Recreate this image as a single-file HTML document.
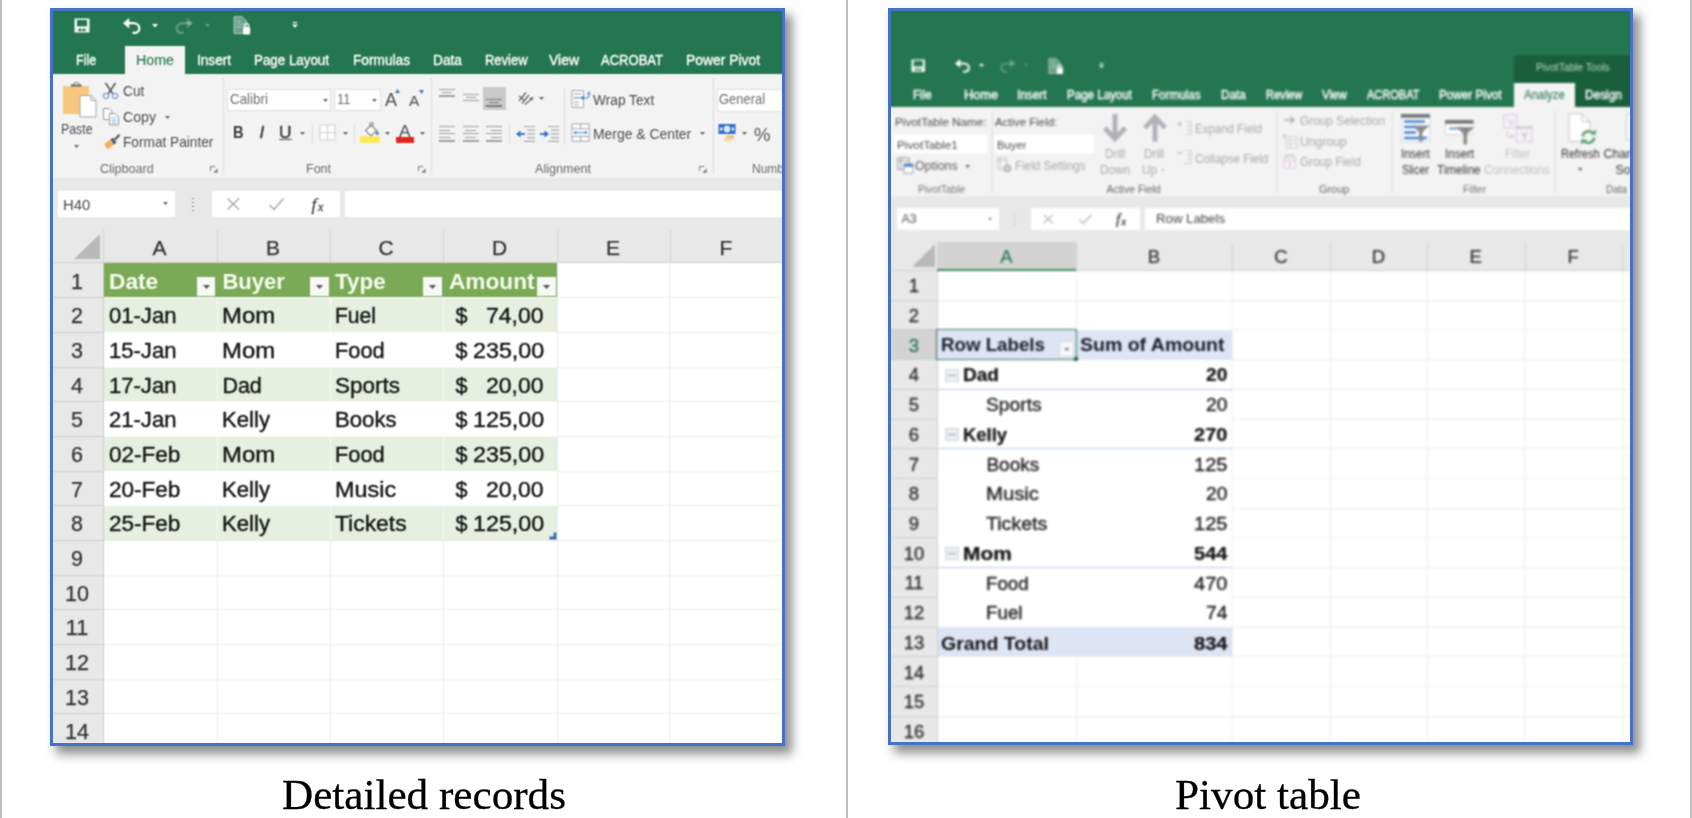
<!DOCTYPE html>
<html lang="en"><head><meta charset="utf-8"><title>Detailed records vs Pivot table</title>
<style>
html,body{margin:0;padding:0}
body{width:1692px;height:818px;position:relative;overflow:hidden;background:#fff;font-family:"Liberation Sans",sans-serif}
.vl{position:absolute;top:0;height:818px;background:#bdbdbd}
.frame{position:absolute;box-sizing:border-box;border:3px solid #4472c4;background:#fff;box-shadow:6px 7px 10px .5px rgba(0,0,0,.45)}
.clip{position:absolute;left:0;top:0;overflow:hidden}
.in{position:absolute;left:0;top:0}
#L{filter:url(#soft)}#R{filter:blur(.85px)}
.in>div,.in>span,.in>svg{position:absolute;display:block}
.in>span{white-space:pre}
.cap{position:absolute;white-space:pre;font-family:"Liberation Serif",serif;color:#000;-webkit-text-stroke:.3px #000}
</style></head><body>
<svg width="0" height="0" style="position:absolute"><filter id="soft" x="-2%" y="-2%" width="104%" height="104%" color-interpolation-filters="sRGB"><feConvolveMatrix order="3" kernelMatrix="1 2 1 2 4 2 1 2 1" divisor="16" edgeMode="duplicate"/></filter></svg>
<div class="vl" style="left:0;width:2px"></div>
<div class="vl" style="left:846px;width:2px"></div>
<div class="vl" style="left:1690px;width:2px"></div>
<div class="frame" style="left:50px;top:8px;width:735px;height:738px"><div class="clip" style="width:729px;height:732px"><div class="in" id="L" style="width:729px;height:732px">
<div style="left:-8px;top:-8px;width:745px;height:71px;background:#247650;"></div>
<div style="left:72px;top:35px;width:60px;height:29px;background:#f3f3f3;"></div>
<div style="left:-8px;top:63px;width:745px;height:104px;background:#f3f3f3;"></div>
<div style="left:-8px;top:167px;width:745px;height:85px;background:#e8e8e8;"></div>
<div style="left:-8px;top:252px;width:58px;height:488px;background:#e8e8e8;"></div>
<div style="left:50px;top:252px;width:687px;height:488px;background:#fff;"></div>
<span style="left:22.50px;top:40.15px;font-size:14px;line-height:18px;color:#fff;transform:scaleX(0.8954);transform-origin:left center;-webkit-text-stroke:0.35px #fff;">File</span>
<span style="left:82.50px;top:40.15px;font-size:14px;line-height:18px;color:#247650;transform:scaleX(1.0149);transform-origin:left center;-webkit-text-stroke:0.1px #247650;">Home</span>
<span style="left:143.80px;top:40.15px;font-size:14px;line-height:18px;color:#fff;transform:scaleX(0.9739);transform-origin:left center;-webkit-text-stroke:0.35px #fff;">Insert</span>
<span style="left:201.00px;top:40.15px;font-size:14px;line-height:18px;color:#fff;transform:scaleX(0.9539);transform-origin:left center;-webkit-text-stroke:0.35px #fff;">Page Layout</span>
<span style="left:299.50px;top:40.15px;font-size:14px;line-height:18px;color:#fff;transform:scaleX(0.9769);transform-origin:left center;-webkit-text-stroke:0.35px #fff;">Formulas</span>
<span style="left:380.00px;top:40.15px;font-size:14px;line-height:18px;color:#fff;transform:scaleX(0.9806);transform-origin:left center;-webkit-text-stroke:0.35px #fff;">Data</span>
<span style="left:431.50px;top:40.15px;font-size:14px;line-height:18px;color:#fff;transform:scaleX(0.9259);transform-origin:left center;-webkit-text-stroke:0.35px #fff;">Review</span>
<span style="left:496.00px;top:40.15px;font-size:14px;line-height:18px;color:#fff;-webkit-text-stroke:0.35px #fff;">View</span>
<span style="left:548.00px;top:40.15px;font-size:14px;line-height:18px;color:#fff;transform:scaleX(0.9304);transform-origin:left center;-webkit-text-stroke:0.35px #fff;">ACROBAT</span>
<span style="left:633.00px;top:40.15px;font-size:14px;line-height:18px;color:#fff;transform:scaleX(0.9907);transform-origin:left center;-webkit-text-stroke:0.35px #fff;">Power Pivot</span>
<div style="left:5px;top:180px;width:117px;height:26px;background:#fff;"></div>
<div style="left:159px;top:180px;width:128px;height:26px;background:#fff;"></div>
<div style="left:292px;top:180px;width:445px;height:26px;background:#fff;"></div>
<span style="left:9.80px;top:184.00px;font-size:15px;line-height:20px;color:#484848;transform:scaleX(0.9885);transform-origin:left center;">H40</span>
<svg style="left:109.5px;top:191.3px" width="5" height="3" viewBox="0 0 5 3"><path d="M0 0H5L2.5 3Z" fill="#666"/></svg>
<div style="left:139.3px;top:186.5px;width:1.6px;height:1.6px;background:#909090;"></div>
<div style="left:139.3px;top:190.5px;width:1.6px;height:1.6px;background:#909090;"></div>
<div style="left:139.3px;top:194.5px;width:1.6px;height:1.6px;background:#909090;"></div>
<div style="left:139.3px;top:198.5px;width:1.6px;height:1.6px;background:#909090;"></div>
<svg style="left:173px;top:186px" width="15" height="14" viewBox="0 0 15 14"><path d="M1.5 1.5L13 12.5M13 1.5L1.5 12.5" stroke="#a6a6a6" stroke-width="1.3" fill="none"/></svg>
<svg style="left:215px;top:186px" width="17" height="14" viewBox="0 0 17 14"><path d="M1.5 8L6 12.5L15.5 1.5" stroke="#a6a6a6" stroke-width="1.4" fill="none"/></svg>
<span style="left:258.50px;top:181.59px;font-size:17.5px;line-height:23px;color:#444;font-style:italic;font-family:'Liberation Serif',serif;-webkit-text-stroke:0.3px #444;">f</span>
<span style="left:265.00px;top:187.75px;font-size:12px;line-height:16px;color:#444;font-style:italic;font-family:'Liberation Serif',serif;-webkit-text-stroke:0.3px #444;">x</span>
<div style="left:50px;top:252.4px;width:454px;height:33.87px;background:#7aaa56;"></div>
<div style="left:50px;top:286.67px;width:454px;height:34.67px;background:#e6efe0;"></div>
<div style="left:50px;top:356.01px;width:454px;height:34.67px;background:#e6efe0;"></div>
<div style="left:50px;top:425.35px;width:454px;height:34.67px;background:#e6efe0;"></div>
<div style="left:50px;top:494.69px;width:454px;height:34.67px;background:#e6efe0;"></div>
<div style="left:50px;top:219px;width:1px;height:33px;background:#d2d2d2;"></div>
<span style="left:99.50px;top:223.02px;font-size:21px;line-height:27px;color:#333;-webkit-text-stroke:0.25px #333;">A</span>
<div style="left:164px;top:219px;width:1px;height:33px;background:#d2d2d2;"></div>
<span style="left:213.00px;top:223.02px;font-size:21px;line-height:27px;color:#333;-webkit-text-stroke:0.25px #333;">B</span>
<div style="left:277px;top:219px;width:1px;height:33px;background:#d2d2d2;"></div>
<span style="left:325.42px;top:223.02px;font-size:21px;line-height:27px;color:#333;-webkit-text-stroke:0.25px #333;">C</span>
<div style="left:390px;top:219px;width:1px;height:33px;background:#d2d2d2;"></div>
<span style="left:438.92px;top:223.02px;font-size:21px;line-height:27px;color:#333;-webkit-text-stroke:0.25px #333;">D</span>
<div style="left:504px;top:219px;width:1px;height:33px;background:#d2d2d2;"></div>
<span style="left:553.00px;top:223.02px;font-size:21px;line-height:27px;color:#333;-webkit-text-stroke:0.25px #333;">E</span>
<div style="left:617px;top:219px;width:1px;height:33px;background:#d2d2d2;"></div>
<span style="left:666.59px;top:223.02px;font-size:21px;line-height:27px;color:#333;-webkit-text-stroke:0.25px #333;">F</span>
<div style="left:-8px;top:251px;width:745px;height:1px;background:#cfcfcf;"></div>
<svg style="left:21px;top:223px" width="27" height="26" viewBox="0 0 27 26"><path d="M26 0V25H0Z" fill="#b9b9b9"/></svg>
<div style="left:-8px;top:286.17px;width:58px;height:1px;background:#cdcdcd;"></div>
<div style="left:504px;top:286.17px;width:233px;height:1px;background:#ebebeb;"></div>
<div style="left:50px;top:286.17px;width:454px;height:1px;background:rgba(255,255,255,.55);"></div>
<div style="left:-8px;top:320.84px;width:58px;height:1px;background:#cdcdcd;"></div>
<div style="left:504px;top:320.84px;width:233px;height:1px;background:#ebebeb;"></div>
<div style="left:50px;top:320.84px;width:454px;height:1px;background:rgba(255,255,255,.55);"></div>
<div style="left:-8px;top:355.51px;width:58px;height:1px;background:#cdcdcd;"></div>
<div style="left:504px;top:355.51px;width:233px;height:1px;background:#ebebeb;"></div>
<div style="left:50px;top:355.51px;width:454px;height:1px;background:rgba(255,255,255,.55);"></div>
<div style="left:-8px;top:390.18px;width:58px;height:1px;background:#cdcdcd;"></div>
<div style="left:504px;top:390.18px;width:233px;height:1px;background:#ebebeb;"></div>
<div style="left:50px;top:390.18px;width:454px;height:1px;background:rgba(255,255,255,.55);"></div>
<div style="left:-8px;top:424.85px;width:58px;height:1px;background:#cdcdcd;"></div>
<div style="left:504px;top:424.85px;width:233px;height:1px;background:#ebebeb;"></div>
<div style="left:50px;top:424.85px;width:454px;height:1px;background:rgba(255,255,255,.55);"></div>
<div style="left:-8px;top:459.52px;width:58px;height:1px;background:#cdcdcd;"></div>
<div style="left:504px;top:459.52px;width:233px;height:1px;background:#ebebeb;"></div>
<div style="left:50px;top:459.52px;width:454px;height:1px;background:rgba(255,255,255,.55);"></div>
<div style="left:-8px;top:494.19px;width:58px;height:1px;background:#cdcdcd;"></div>
<div style="left:504px;top:494.19px;width:233px;height:1px;background:#ebebeb;"></div>
<div style="left:50px;top:494.19px;width:454px;height:1px;background:rgba(255,255,255,.55);"></div>
<div style="left:-8px;top:528.86px;width:58px;height:1px;background:#cdcdcd;"></div>
<div style="left:50px;top:528.86px;width:687px;height:1px;background:#ebebeb;"></div>
<div style="left:-8px;top:563.53px;width:58px;height:1px;background:#cdcdcd;"></div>
<div style="left:50px;top:563.53px;width:687px;height:1px;background:#ebebeb;"></div>
<div style="left:-8px;top:598.2px;width:58px;height:1px;background:#cdcdcd;"></div>
<div style="left:50px;top:598.2px;width:687px;height:1px;background:#ebebeb;"></div>
<div style="left:-8px;top:632.87px;width:58px;height:1px;background:#cdcdcd;"></div>
<div style="left:50px;top:632.87px;width:687px;height:1px;background:#ebebeb;"></div>
<div style="left:-8px;top:667.54px;width:58px;height:1px;background:#cdcdcd;"></div>
<div style="left:50px;top:667.54px;width:687px;height:1px;background:#ebebeb;"></div>
<div style="left:-8px;top:702.21px;width:58px;height:1px;background:#cdcdcd;"></div>
<div style="left:50px;top:702.21px;width:687px;height:1px;background:#ebebeb;"></div>
<div style="left:-8px;top:736.88px;width:58px;height:1px;background:#cdcdcd;"></div>
<div style="left:50px;top:736.88px;width:687px;height:1px;background:#ebebeb;"></div>
<div style="left:49.5px;top:252px;width:1px;height:488px;background:#cdcdcd;"></div>
<div style="left:163.5px;top:529.36px;width:1px;height:210.64px;background:#ebebeb;"></div>
<div style="left:163.5px;top:286.67px;width:1px;height:242.69px;background:rgba(255,255,255,.6);"></div>
<div style="left:276.5px;top:529.36px;width:1px;height:210.64px;background:#ebebeb;"></div>
<div style="left:276.5px;top:286.67px;width:1px;height:242.69px;background:rgba(255,255,255,.6);"></div>
<div style="left:389.5px;top:529.36px;width:1px;height:210.64px;background:#ebebeb;"></div>
<div style="left:389.5px;top:286.67px;width:1px;height:242.69px;background:rgba(255,255,255,.6);"></div>
<div style="left:503.5px;top:529.36px;width:1px;height:210.64px;background:#ebebeb;"></div>
<div style="left:503.5px;top:252px;width:1px;height:277.36px;background:#ebebeb;"></div>
<div style="left:616.3px;top:252px;width:1px;height:488px;background:#ebebeb;"></div>
<span style="left:18.02px;top:256.55px;font-size:21.5px;line-height:28px;color:#333;-webkit-text-stroke:0.25px #333;">1</span>
<span style="left:18.02px;top:291.22px;font-size:21.5px;line-height:28px;color:#333;-webkit-text-stroke:0.25px #333;">2</span>
<span style="left:18.02px;top:325.89px;font-size:21.5px;line-height:28px;color:#333;-webkit-text-stroke:0.25px #333;">3</span>
<span style="left:18.02px;top:360.56px;font-size:21.5px;line-height:28px;color:#333;-webkit-text-stroke:0.25px #333;">4</span>
<span style="left:18.02px;top:395.23px;font-size:21.5px;line-height:28px;color:#333;-webkit-text-stroke:0.25px #333;">5</span>
<span style="left:18.02px;top:429.90px;font-size:21.5px;line-height:28px;color:#333;-webkit-text-stroke:0.25px #333;">6</span>
<span style="left:18.02px;top:464.57px;font-size:21.5px;line-height:28px;color:#333;-webkit-text-stroke:0.25px #333;">7</span>
<span style="left:18.02px;top:499.24px;font-size:21.5px;line-height:28px;color:#333;-webkit-text-stroke:0.25px #333;">8</span>
<span style="left:18.02px;top:533.91px;font-size:21.5px;line-height:28px;color:#333;-webkit-text-stroke:0.25px #333;">9</span>
<span style="left:12.04px;top:568.58px;font-size:21.5px;line-height:28px;color:#333;-webkit-text-stroke:0.25px #333;">10</span>
<span style="left:12.84px;top:603.25px;font-size:21.5px;line-height:28px;color:#333;-webkit-text-stroke:0.25px #333;">11</span>
<span style="left:12.04px;top:637.92px;font-size:21.5px;line-height:28px;color:#333;-webkit-text-stroke:0.25px #333;">12</span>
<span style="left:12.04px;top:672.59px;font-size:21.5px;line-height:28px;color:#333;-webkit-text-stroke:0.25px #333;">13</span>
<span style="left:12.04px;top:707.26px;font-size:21.5px;line-height:28px;color:#333;-webkit-text-stroke:0.25px #333;">14</span>
<span style="left:55.80px;top:256.08px;font-size:22px;line-height:29px;color:#f6fbf0;font-weight:bold;transform:scaleX(1.0318);transform-origin:left center;">Date</span>
<span style="left:169.40px;top:256.08px;font-size:22px;line-height:29px;color:#f6fbf0;font-weight:bold;">Buyer</span>
<span style="left:282.40px;top:256.08px;font-size:22px;line-height:29px;color:#f6fbf0;font-weight:bold;transform:scaleX(1.0178);transform-origin:left center;">Type</span>
<span style="left:395.70px;top:256.08px;font-size:22px;line-height:29px;color:#f6fbf0;font-weight:bold;transform:scaleX(1.0290);transform-origin:left center;">Amount</span>
<div style="left:143.7px;top:266.2px;width:18.8px;height:18.8px;background:#f7f9f4;"></div>
<svg style="left:149.5px;top:273.8px" width="7" height="4" viewBox="0 0 7 4"><path d="M0 0H7L3.5 4Z" fill="#555"/></svg>
<div style="left:257.2px;top:266.2px;width:18.8px;height:18.8px;background:#f7f9f4;"></div>
<svg style="left:263px;top:273.8px" width="7" height="4" viewBox="0 0 7 4"><path d="M0 0H7L3.5 4Z" fill="#555"/></svg>
<div style="left:370.4px;top:266.2px;width:18.8px;height:18.8px;background:#f7f9f4;"></div>
<svg style="left:376.2px;top:273.8px" width="7" height="4" viewBox="0 0 7 4"><path d="M0 0H7L3.5 4Z" fill="#555"/></svg>
<div style="left:484px;top:266.2px;width:18.8px;height:18.8px;background:#f7f9f4;"></div>
<svg style="left:489.8px;top:273.8px" width="7" height="4" viewBox="0 0 7 4"><path d="M0 0H7L3.5 4Z" fill="#555"/></svg>
<span style="left:55.80px;top:291.22px;font-size:21.5px;line-height:28px;color:#161616;transform:scaleX(1.0253);transform-origin:left center;-webkit-text-stroke:0.4px #161616;">01-Jan</span>
<span style="left:169.40px;top:291.22px;font-size:21.5px;line-height:28px;color:#161616;transform:scaleX(1.1114);transform-origin:left center;-webkit-text-stroke:0.4px #161616;">Mom</span>
<span style="left:282.40px;top:291.22px;font-size:21.5px;line-height:28px;color:#161616;transform:scaleX(0.9803);transform-origin:left center;-webkit-text-stroke:0.4px #161616;">Fuel</span>
<span style="left:402.50px;top:291.22px;font-size:21.5px;line-height:28px;color:#161616;-webkit-text-stroke:0.4px #161616;">$</span>
<span style="left:433.30px;top:291.22px;font-size:21.5px;line-height:28px;color:#161616;transform:scaleX(1.0687);transform-origin:left center;-webkit-text-stroke:0.4px #161616;">74,00</span>
<span style="left:55.80px;top:325.89px;font-size:21.5px;line-height:28px;color:#161616;transform:scaleX(1.0253);transform-origin:left center;-webkit-text-stroke:0.4px #161616;">15-Jan</span>
<span style="left:169.40px;top:325.89px;font-size:21.5px;line-height:28px;color:#161616;transform:scaleX(1.1114);transform-origin:left center;-webkit-text-stroke:0.4px #161616;">Mom</span>
<span style="left:282.40px;top:325.89px;font-size:21.5px;line-height:28px;color:#161616;transform:scaleX(1.0121);transform-origin:left center;-webkit-text-stroke:0.4px #161616;">Food</span>
<span style="left:402.50px;top:325.89px;font-size:21.5px;line-height:28px;color:#161616;-webkit-text-stroke:0.4px #161616;">$</span>
<span style="left:419.60px;top:325.89px;font-size:21.5px;line-height:28px;color:#161616;transform:scaleX(1.0827);transform-origin:left center;-webkit-text-stroke:0.4px #161616;">235,00</span>
<span style="left:55.80px;top:360.56px;font-size:21.5px;line-height:28px;color:#161616;transform:scaleX(1.0253);transform-origin:left center;-webkit-text-stroke:0.4px #161616;">17-Jan</span>
<span style="left:169.40px;top:360.56px;font-size:21.5px;line-height:28px;color:#161616;-webkit-text-stroke:0.4px #161616;">Dad</span>
<span style="left:282.40px;top:360.56px;font-size:21.5px;line-height:28px;color:#161616;transform:scaleX(1.0461);transform-origin:left center;-webkit-text-stroke:0.4px #161616;">Sports</span>
<span style="left:402.50px;top:360.56px;font-size:21.5px;line-height:28px;color:#161616;-webkit-text-stroke:0.4px #161616;">$</span>
<span style="left:433.30px;top:360.56px;font-size:21.5px;line-height:28px;color:#161616;transform:scaleX(1.0687);transform-origin:left center;-webkit-text-stroke:0.4px #161616;">20,00</span>
<span style="left:55.80px;top:395.23px;font-size:21.5px;line-height:28px;color:#161616;transform:scaleX(1.0253);transform-origin:left center;-webkit-text-stroke:0.4px #161616;">21-Jan</span>
<span style="left:169.40px;top:395.23px;font-size:21.5px;line-height:28px;color:#161616;transform:scaleX(1.0300);transform-origin:left center;-webkit-text-stroke:0.4px #161616;">Kelly</span>
<span style="left:282.40px;top:395.23px;font-size:21.5px;line-height:28px;color:#161616;transform:scaleX(1.0309);transform-origin:left center;-webkit-text-stroke:0.4px #161616;">Books</span>
<span style="left:402.50px;top:395.23px;font-size:21.5px;line-height:28px;color:#161616;-webkit-text-stroke:0.4px #161616;">$</span>
<span style="left:419.60px;top:395.23px;font-size:21.5px;line-height:28px;color:#161616;transform:scaleX(1.0827);transform-origin:left center;-webkit-text-stroke:0.4px #161616;">125,00</span>
<span style="left:55.80px;top:429.90px;font-size:21.5px;line-height:28px;color:#161616;transform:scaleX(1.0481);transform-origin:left center;-webkit-text-stroke:0.4px #161616;">02-Feb</span>
<span style="left:169.40px;top:429.90px;font-size:21.5px;line-height:28px;color:#161616;transform:scaleX(1.1114);transform-origin:left center;-webkit-text-stroke:0.4px #161616;">Mom</span>
<span style="left:282.40px;top:429.90px;font-size:21.5px;line-height:28px;color:#161616;transform:scaleX(1.0121);transform-origin:left center;-webkit-text-stroke:0.4px #161616;">Food</span>
<span style="left:402.50px;top:429.90px;font-size:21.5px;line-height:28px;color:#161616;-webkit-text-stroke:0.4px #161616;">$</span>
<span style="left:419.60px;top:429.90px;font-size:21.5px;line-height:28px;color:#161616;transform:scaleX(1.0827);transform-origin:left center;-webkit-text-stroke:0.4px #161616;">235,00</span>
<span style="left:55.80px;top:464.57px;font-size:21.5px;line-height:28px;color:#161616;transform:scaleX(1.0481);transform-origin:left center;-webkit-text-stroke:0.4px #161616;">20-Feb</span>
<span style="left:169.40px;top:464.57px;font-size:21.5px;line-height:28px;color:#161616;transform:scaleX(1.0300);transform-origin:left center;-webkit-text-stroke:0.4px #161616;">Kelly</span>
<span style="left:282.40px;top:464.57px;font-size:21.5px;line-height:28px;color:#161616;transform:scaleX(1.0883);transform-origin:left center;-webkit-text-stroke:0.4px #161616;">Music</span>
<span style="left:402.50px;top:464.57px;font-size:21.5px;line-height:28px;color:#161616;-webkit-text-stroke:0.4px #161616;">$</span>
<span style="left:433.30px;top:464.57px;font-size:21.5px;line-height:28px;color:#161616;transform:scaleX(1.0687);transform-origin:left center;-webkit-text-stroke:0.4px #161616;">20,00</span>
<span style="left:55.80px;top:499.24px;font-size:21.5px;line-height:28px;color:#161616;transform:scaleX(1.0481);transform-origin:left center;-webkit-text-stroke:0.4px #161616;">25-Feb</span>
<span style="left:169.40px;top:499.24px;font-size:21.5px;line-height:28px;color:#161616;transform:scaleX(1.0300);transform-origin:left center;-webkit-text-stroke:0.4px #161616;">Kelly</span>
<span style="left:282.40px;top:499.24px;font-size:21.5px;line-height:28px;color:#161616;transform:scaleX(1.0640);transform-origin:left center;-webkit-text-stroke:0.4px #161616;">Tickets</span>
<span style="left:402.50px;top:499.24px;font-size:21.5px;line-height:28px;color:#161616;-webkit-text-stroke:0.4px #161616;">$</span>
<span style="left:419.60px;top:499.24px;font-size:21.5px;line-height:28px;color:#161616;transform:scaleX(1.0827);transform-origin:left center;-webkit-text-stroke:0.4px #161616;">125,00</span>
<svg style="left:496px;top:521.36px" width="7.5" height="7.5" viewBox="0 0 7.5 7.5"><path d="M6 0.5V6H0.5" stroke="#3a66b8" stroke-width="2.8" fill="none"/></svg>
<svg style="left:20.5px;top:7px" width="16" height="15" viewBox="0 0 16 15"><path d="M0.5 0.5H15.5V14.5H0.5Z" fill="#f2f7f4"/><rect x="3" y="2" width="10" height="6.3" fill="#247650"/><rect x="4.5" y="10.8" width="7" height="2.4" fill="#247650"/><rect x="7.3" y="10.8" width="1.2" height="2.4" fill="#f2f7f4"/></svg>
<svg style="left:70px;top:7px" width="18" height="16" viewBox="0 0 18 16"><g ><path d="M2 5.2H10.2C14 5.2 16.3 7.6 16.3 10.4C16.3 13 14.2 15 11 15H9.5" fill="none" stroke="#fff" stroke-width="2.3"/><path d="M0 5.2L6.2 0V10.4Z" fill="#fff"/></g></svg>
<svg style="left:99px;top:12.55px" width="6" height="3.5" viewBox="0 0 6 3.5"><path d="M0 0H6L3 3.5Z" fill="#fff"/></svg>
<svg style="left:122px;top:7px" width="18" height="16" viewBox="0 0 18 16"><g transform="translate(18,0) scale(-1,1)"><path d="M2 5.2H10.2C14 5.2 16.3 7.6 16.3 10.4C16.3 13 14.2 15 11 15H9.5" fill="none" stroke="rgba(255,255,255,.28)" stroke-width="2.3"/><path d="M0 5.2L6.2 0V10.4Z" fill="rgba(255,255,255,.28)"/></g></svg>
<svg style="left:151.5px;top:12.8px" width="5" height="3" viewBox="0 0 5 3"><path d="M0 0H5L2.5 3Z" fill="rgba(255,255,255,.3)"/></svg>
<svg style="left:180px;top:5.3px" width="18" height="19" viewBox="0 0 18 19"><path d="M1 0.7H9L13.5 5V17.5H1Z" fill="rgba(255,255,255,.32)" stroke="rgba(255,255,255,.55)" stroke-width="1"/><path d="M3.2 5H8M3.2 8H10.5M3.2 11H9" stroke="rgba(255,255,255,.45)" stroke-width="1"/><rect x="10" y="11" width="7.2" height="7.5" rx="1.6" fill="#fff"/><path d="M11.5 11.5V9.8A2.1 2.1 0 0 1 15.7 9.8V11.5" stroke="#fff" stroke-width="1.3" fill="none"/></svg>
<svg style="left:239px;top:10.8px" width="6" height="6" viewBox="0 0 6 6"><rect x="0.8" y="0" width="4.4" height="1.1" fill="#fff"/><path d="M0 2.6H6L3 5.8Z" fill="#fff"/></svg>
<svg style="left:9px;top:69px" width="36" height="38" viewBox="0 0 36 38"><rect x="1" y="6" width="26" height="28" rx="1" fill="#f6c77d"/><path d="M9 6.5V4.2H12V2.2H16.5V4.2H19.5V6.5Z" fill="#6e6e6e"/><rect x="12.8" y="2.8" width="3" height="1.8" fill="#f3f3f3"/><path d="M18 15.5H29L34 20.5V37H18Z" fill="#fff" stroke="#a5a5a5" stroke-width="1"/><path d="M29 15.5V20.5H34" fill="none" stroke="#a5a5a5" stroke-width="1"/></svg>
<span style="left:8.00px;top:109.08px;font-size:14.5px;line-height:19px;color:#4d4d4d;transform:scaleX(0.8495);transform-origin:left center;">Paste</span>
<svg style="left:21.1px;top:134.1px" width="5" height="3" viewBox="0 0 5 3"><path d="M0 0H5L2.5 3Z" fill="#666"/></svg>
<svg style="left:49px;top:70.5px" width="17" height="18" viewBox="0 0 17 18"><path d="M3.5 1L11 12M13.5 1L6 12" stroke="#555" stroke-width="1.5" fill="none"/><circle cx="4" cy="14" r="2.6" fill="none" stroke="#7fa6d8" stroke-width="1.3"/><circle cx="13" cy="14" r="2.6" fill="none" stroke="#7fa6d8" stroke-width="1.3"/></svg>
<span style="left:70.40px;top:70.78px;font-size:14.5px;line-height:19px;color:#4d4d4d;transform:scaleX(0.9440);transform-origin:left center;">Cut</span>
<svg style="left:49px;top:96px" width="18" height="19" viewBox="0 0 18 19"><path d="M1.5 1.5H7L10 4.5V12.5H1.5Z" fill="#fdfdfd" stroke="#9a9a9a" stroke-width="1"/><path d="M7.5 6.5H13L16.5 10V18H7.5Z" fill="#fdfdfd" stroke="#9a9a9a" stroke-width="1"/><path d="M9.5 11H14.5M9.5 13.5H14.5M9.5 16H14.5" stroke="#8fb0dc" stroke-width="1"/></svg>
<span style="left:70.40px;top:96.58px;font-size:14.5px;line-height:19px;color:#4d4d4d;transform:scaleX(0.9749);transform-origin:left center;">Copy</span>
<svg style="left:111.5px;top:104.5px" width="5" height="3" viewBox="0 0 5 3"><path d="M0 0H5L2.5 3Z" fill="#666"/></svg>
<svg style="left:49px;top:122px" width="20" height="19" viewBox="0 0 20 19"><path d="M2 11L8.5 6.5L12 11.5L5.5 16.5Z" fill="#f2b25c"/><path d="M8.5 6.5L11 4.8L14.5 9.8L12 11.5Z" fill="#555"/><path d="M12.8 6.8L17.5 1.8" stroke="#555" stroke-width="2.2"/></svg>
<span style="left:70.40px;top:122.38px;font-size:14.5px;line-height:19px;color:#4d4d4d;transform:scaleX(0.9427);transform-origin:left center;">Format Painter</span>
<span style="left:47.40px;top:150.14px;font-size:12px;line-height:16px;color:#6a6a6a;transform:scaleX(1.0435);transform-origin:left center;">Clipboard</span>
<svg style="left:157px;top:154.5px" width="8" height="7" viewBox="0 0 8 7"><path d="M0.5 5V0.5H5" stroke="#7a7a7a" stroke-width="1" fill="none"/><path d="M3.2 6.8H7.6V2.6Z" fill="#7a7a7a"/></svg>
<div style="left:169.5px;top:67px;width:1px;height:96px;background:#dcdcdc;"></div>
<div style="left:174px;top:78px;width:104px;height:22px;background:#fff;box-shadow:inset 0 0 0 1px #e0e0e0"></div>
<span style="left:176.50px;top:79.48px;font-size:14.5px;line-height:19px;color:#6e6e6e;transform:scaleX(0.9223);transform-origin:left center;">Calibri</span>
<svg style="left:270px;top:87.5px" width="5" height="3" viewBox="0 0 5 3"><path d="M0 0H5L2.5 3Z" fill="#666"/></svg>
<div style="left:281px;top:78px;width:47px;height:22px;background:#fff;box-shadow:inset 0 0 0 1px #e0e0e0"></div>
<span style="left:283.60px;top:79.48px;font-size:14.5px;line-height:19px;color:#6e6e6e;transform:scaleX(0.8902);transform-origin:left center;">11</span>
<svg style="left:318.5px;top:87.5px" width="5" height="3" viewBox="0 0 5 3"><path d="M0 0H5L2.5 3Z" fill="#666"/></svg>
<span style="left:332.00px;top:77.76px;font-size:18px;line-height:23px;color:#4d4d4d;">A</span>
<svg style="left:342px;top:78px" width="5" height="4" viewBox="0 0 5 4"><path d="M0 4H5L2.5 0Z" fill="#3b78c9"/></svg>
<span style="left:355.70px;top:80.98px;font-size:14.5px;line-height:19px;color:#4d4d4d;transform:scaleX(1.0650);transform-origin:left center;">A</span>
<svg style="left:366px;top:78.5px" width="5" height="4" viewBox="0 0 5 4"><path d="M0 0H5L2.5 4Z" fill="#3b78c9"/></svg>
<span style="left:180.00px;top:110.91px;font-size:17px;line-height:22px;color:#3b3b3b;font-weight:bold;transform:scaleX(0.8634);transform-origin:left center;">B</span>
<span style="left:206.50px;top:110.91px;font-size:17px;line-height:22px;color:#3b3b3b;font-style:italic;-webkit-text-stroke:0.5px #3b3b3b;">I</span>
<span style="left:226.00px;top:110.68px;font-size:16.5px;line-height:21px;color:#3b3b3b;transform:scaleX(1.0490);transform-origin:left center;-webkit-text-stroke:0.4px #3b3b3b;">U</span>
<div style="left:226px;top:128.3px;width:12.5px;height:1px;background:#555;"></div>
<svg style="left:247px;top:120.5px" width="5" height="3" viewBox="0 0 5 3"><path d="M0 0H5L2.5 3Z" fill="#666"/></svg>
<div style="left:258.5px;top:112px;width:1px;height:21px;background:#dcdcdc;"></div>
<svg style="left:266px;top:113px" width="17" height="17" viewBox="0 0 17 17"><path d="M1 1H16V16H1ZM8.5 1V16M1 8.5H16" fill="#fdfdfd" stroke="#d2d2d2" stroke-width="1.2"/></svg>
<svg style="left:289.5px;top:120.5px" width="5" height="3" viewBox="0 0 5 3"><path d="M0 0H5L2.5 3Z" fill="#666"/></svg>
<div style="left:300.5px;top:112px;width:1px;height:21px;background:#dcdcdc;"></div>
<svg style="left:306px;top:109px" width="22" height="23" viewBox="0 0 22 23"><path d="M6.5 10.5L12 5L17.5 10.5L12 16Z" fill="#fcfcfc" stroke="#858585" stroke-width="1.2"/><path d="M11 7.5V4.2A1.6 1.6 0 0 1 14.2 4.2V6" stroke="#858585" stroke-width="1.1" fill="none"/><path d="M18.3 10.5C19.4 12 19.8 12.8 19.8 13.5A1.5 1.5 0 0 1 16.8 13.5C16.8 12.8 17.2 12 18.3 10.5Z" fill="#4b7fc4"/><rect x="0.6" y="16.2" width="20" height="6.6" fill="#ffe84d"/></svg>
<svg style="left:331.9px;top:120.5px" width="5" height="3" viewBox="0 0 5 3"><path d="M0 0H5L2.5 3Z" fill="#666"/></svg>
<span style="left:346.30px;top:110.28px;font-size:16.5px;line-height:21px;color:#4d4d4d;transform:scaleX(1.0631);transform-origin:left center;">A</span>
<div style="left:343px;top:126.4px;width:18px;height:5.4px;background:#e3241b;"></div>
<svg style="left:366.5px;top:120.5px" width="5" height="3" viewBox="0 0 5 3"><path d="M0 0H5L2.5 3Z" fill="#666"/></svg>
<span style="left:253.00px;top:150.14px;font-size:12px;line-height:16px;color:#6a6a6a;transform:scaleX(1.0412);transform-origin:left center;">Font</span>
<svg style="left:365px;top:154.5px" width="8" height="7" viewBox="0 0 8 7"><path d="M0.5 5V0.5H5" stroke="#7a7a7a" stroke-width="1" fill="none"/><path d="M3.2 6.8H7.6V2.6Z" fill="#7a7a7a"/></svg>
<div style="left:378.2px;top:67px;width:1px;height:96px;background:#dcdcdc;"></div>
<div style="left:386px;top:78px;width:16px;height:1.2px;background:#a0a0a0;"></div>
<div style="left:389px;top:81.2px;width:10px;height:1.2px;background:#a0a0a0;"></div>
<div style="left:386px;top:84.4px;width:16px;height:1.2px;background:#a0a0a0;"></div>
<div style="left:409.5px;top:82.5px;width:16px;height:1.2px;background:#a0a0a0;"></div>
<div style="left:412.5px;top:85.7px;width:10px;height:1.2px;background:#a0a0a0;"></div>
<div style="left:409.5px;top:88.9px;width:16px;height:1.2px;background:#a0a0a0;"></div>
<div style="left:429.5px;top:75.6px;width:23.5px;height:23.8px;background:#c9c9c9;"></div>
<div style="left:433px;top:88px;width:16px;height:1.2px;background:#7d7d7d;"></div>
<div style="left:436px;top:91.2px;width:10px;height:1.2px;background:#7d7d7d;"></div>
<div style="left:433px;top:94.4px;width:16px;height:1.2px;background:#7d7d7d;"></div>
<svg style="left:464px;top:79px" width="18" height="16" viewBox="0 0 18 16"><path d="M2 11L9 2.5M5 13.5L12 5M2 6L7 10" stroke="#666" stroke-width="1.3" fill="none"/><path d="M8 14.5L15 8.5" stroke="#666" stroke-width="1.2"/><path d="M16.5 7L12.5 8L15 11Z" fill="#666"/></svg>
<svg style="left:485.5px;top:85.5px" width="5" height="3" viewBox="0 0 5 3"><path d="M0 0H5L2.5 3Z" fill="#666"/></svg>
<div style="left:511.2px;top:77px;width:1px;height:57px;background:#dcdcdc;"></div>
<svg style="left:518px;top:78px" width="20" height="20" viewBox="0 0 20 20"><path d="M1 1.5H12.5V18.5H1Z" fill="#fbfbfb" stroke="#a8a8a8" stroke-width="1"/><path d="M3 5H10.5M3 13H7.5M3 16H7.5" stroke="#a8a8a8" stroke-width="1"/><path d="M3 8.8H15.5Q18 8.8 18 6.3V4" stroke="#6f9ed8" stroke-width="1.3" fill="none"/><path d="M15.6 5.5L18 2L20 5.5Z" fill="#6f9ed8"/><path d="M10 8.8L13 6.2V11.4Z" fill="#3f78c4"/></svg>
<span style="left:539.80px;top:79.65px;font-size:14px;line-height:18px;color:#4d4d4d;transform:scaleX(0.9791);transform-origin:left center;">Wrap Text</span>
<div style="left:386px;top:115px;width:16px;height:1.2px;background:#a0a0a0;"></div>
<div style="left:386px;top:118.6px;width:11px;height:1.2px;background:#a0a0a0;"></div>
<div style="left:386px;top:122.2px;width:16px;height:1.2px;background:#a0a0a0;"></div>
<div style="left:386px;top:125.8px;width:11px;height:1.2px;background:#a0a0a0;"></div>
<div style="left:386px;top:129.4px;width:16px;height:1.2px;background:#a0a0a0;"></div>
<div style="left:409.5px;top:115px;width:16px;height:1.2px;background:#a0a0a0;"></div>
<div style="left:412px;top:118.6px;width:11px;height:1.2px;background:#a0a0a0;"></div>
<div style="left:409.5px;top:122.2px;width:16px;height:1.2px;background:#a0a0a0;"></div>
<div style="left:412px;top:125.8px;width:11px;height:1.2px;background:#a0a0a0;"></div>
<div style="left:409.5px;top:129.4px;width:16px;height:1.2px;background:#a0a0a0;"></div>
<div style="left:433px;top:115px;width:16px;height:1.2px;background:#a0a0a0;"></div>
<div style="left:438px;top:118.6px;width:11px;height:1.2px;background:#a0a0a0;"></div>
<div style="left:433px;top:122.2px;width:16px;height:1.2px;background:#a0a0a0;"></div>
<div style="left:438px;top:125.8px;width:11px;height:1.2px;background:#a0a0a0;"></div>
<div style="left:433px;top:129.4px;width:16px;height:1.2px;background:#a0a0a0;"></div>
<div style="left:455.5px;top:112px;width:1px;height:21px;background:#dcdcdc;"></div>
<svg style="left:463px;top:113.5px" width="19" height="18" viewBox="0 0 19 18"><path d="M8 1.5H19M11 5.2H19M11 8.9H19M11 12.6H19M8 16.3H19" stroke="#ababab" stroke-width="1.2"/><path d="M3 9H9" stroke="#2f6fc6" stroke-width="1.8"/><path d="M4.5 5.5L0 9L4.5 12.5Z" fill="#2f6fc6"/></svg>
<svg style="left:487px;top:113.5px" width="19" height="18" viewBox="0 0 19 18"><path d="M8 1.5H19M11 5.2H19M11 8.9H19M11 12.6H19M8 16.3H19" stroke="#ababab" stroke-width="1.2"/><path d="M0 9H6" stroke="#2f6fc6" stroke-width="1.8"/><path d="M4.5 5.5L9 9L4.5 12.5Z" fill="#2f6fc6"/></svg>
<svg style="left:517.5px;top:111.8px" width="19.2" height="19.2" viewBox="0 0 20 20"><path d="M1 1H19V19H1ZM1 6H19M1 14H19M10 1V6M10 14V19" fill="#fbfbfb" stroke="#a4a4a4" stroke-width="1"/><rect x="1.5" y="6.5" width="17" height="7" fill="#eef4fc"/><path d="M4 10H16" stroke="#6f9ed8" stroke-width="1.1"/><path d="M2.5 10L5.5 8V12ZM17.5 10L14.5 8V12Z" fill="#5b8fd0"/></svg>
<span style="left:539.80px;top:113.65px;font-size:14px;line-height:18px;color:#4d4d4d;transform:scaleX(0.9937);transform-origin:left center;">Merge &amp; Center</span>
<svg style="left:646.5px;top:121.3px" width="5" height="3" viewBox="0 0 5 3"><path d="M0 0H5L2.5 3Z" fill="#666"/></svg>
<span style="left:481.70px;top:150.14px;font-size:12px;line-height:16px;color:#6a6a6a;transform:scaleX(1.0476);transform-origin:left center;">Alignment</span>
<svg style="left:646px;top:154.5px" width="8" height="7" viewBox="0 0 8 7"><path d="M0.5 5V0.5H5" stroke="#7a7a7a" stroke-width="1" fill="none"/><path d="M3.2 6.8H7.6V2.6Z" fill="#7a7a7a"/></svg>
<div style="left:660px;top:67px;width:1px;height:96px;background:#dcdcdc;"></div>
<div style="left:663.8px;top:78px;width:73.2px;height:22.5px;background:#fff;box-shadow:inset 0 0 0 1px #e0e0e0"></div>
<span style="left:665.60px;top:79.48px;font-size:14.5px;line-height:19px;color:#6e6e6e;transform:scaleX(0.8917);transform-origin:left center;">General</span>
<svg style="left:665px;top:112px" width="19" height="19" viewBox="0 0 19 19"><rect x="0.5" y="1" width="17" height="10" fill="#2f6fc6"/><ellipse cx="9" cy="6" rx="3.2" ry="3.6" fill="#dfeaf8"/><rect x="2" y="4.5" width="2.5" height="3" fill="#dfeaf8"/><rect x="13.5" y="4.5" width="2.5" height="3" fill="#dfeaf8"/><ellipse cx="12" cy="14" rx="4.5" ry="2" fill="#f1c27a"/><ellipse cx="10" cy="16.5" rx="4.5" ry="2" fill="#f6d6a3"/></svg>
<svg style="left:689.2px;top:121px" width="5" height="3" viewBox="0 0 5 3"><path d="M0 0H5L2.5 3Z" fill="#666"/></svg>
<span style="left:701.00px;top:110.92px;font-size:19px;line-height:25px;color:#555;transform:scaleX(0.9767);transform-origin:left center;">%</span>
<span style="left:699.00px;top:150.14px;font-size:12px;line-height:16px;color:#6a6a6a;">Number</span>
</div></div></div>
<div class="frame" style="left:888px;top:8px;width:745px;height:737px"><div class="clip" style="width:739px;height:731px"><div class="in" id="R" style="width:739px;height:731px">
<div style="left:-8px;top:-8px;width:755px;height:104px;background:#247650;"></div>
<div style="left:623px;top:44px;width:124px;height:52px;background:#1a5f3b;"></div>
<div style="left:623px;top:72px;width:60.5px;height:25px;background:#f3f3f3;"></div>
<div style="left:-8px;top:96px;width:755px;height:89px;background:#f3f3f3;"></div>
<div style="left:-8px;top:185px;width:755px;height:74.5px;background:#e8e8e8;"></div>
<div style="left:-8px;top:259.5px;width:54px;height:479.5px;background:#e8e8e8;"></div>
<div style="left:46px;top:259.5px;width:701px;height:479.5px;background:#fff;"></div>
<span style="left:22.00px;top:76.14px;font-size:12px;line-height:16px;color:#fff;transform:scaleX(0.9619);transform-origin:left center;-webkit-text-stroke:0.4px #fff;">File</span>
<span style="left:73.00px;top:76.14px;font-size:12px;line-height:16px;color:#fff;transform:scaleX(1.0622);transform-origin:left center;-webkit-text-stroke:0.4px #fff;">Home</span>
<span style="left:126.40px;top:76.14px;font-size:12px;line-height:16px;color:#fff;transform:scaleX(0.9863);transform-origin:left center;-webkit-text-stroke:0.4px #fff;">Insert</span>
<span style="left:175.70px;top:76.14px;font-size:12px;line-height:16px;color:#fff;transform:scaleX(0.9631);transform-origin:left center;-webkit-text-stroke:0.4px #fff;">Page Layout</span>
<span style="left:260.50px;top:76.14px;font-size:12px;line-height:16px;color:#fff;transform:scaleX(0.9698);transform-origin:left center;-webkit-text-stroke:0.4px #fff;">Formulas</span>
<span style="left:329.80px;top:76.14px;font-size:12px;line-height:16px;color:#fff;transform:scaleX(0.9823);transform-origin:left center;-webkit-text-stroke:0.4px #fff;">Data</span>
<span style="left:374.50px;top:76.14px;font-size:12px;line-height:16px;color:#fff;transform:scaleX(0.9200);transform-origin:left center;-webkit-text-stroke:0.4px #fff;">Review</span>
<span style="left:431.00px;top:76.14px;font-size:12px;line-height:16px;color:#fff;transform:scaleX(0.9615);transform-origin:left center;-webkit-text-stroke:0.4px #fff;">View</span>
<span style="left:476.00px;top:76.14px;font-size:12px;line-height:16px;color:#fff;transform:scaleX(0.9192);transform-origin:left center;-webkit-text-stroke:0.4px #fff;">ACROBAT</span>
<span style="left:548.40px;top:76.14px;font-size:12px;line-height:16px;color:#fff;transform:scaleX(0.9777);transform-origin:left center;-webkit-text-stroke:0.4px #fff;">Power Pivot</span>
<span style="left:632.50px;top:76.14px;font-size:12px;line-height:16px;color:#247650;transform:scaleX(0.9580);transform-origin:left center;-webkit-text-stroke:0.1px #247650;">Analyze</span>
<span style="left:693.70px;top:76.14px;font-size:12px;line-height:16px;color:#fff;transform:scaleX(0.9879);transform-origin:left center;-webkit-text-stroke:0.4px #fff;">Design</span>
<span style="left:644.80px;top:49.16px;font-size:10.5px;line-height:14px;color:#b9d8c4;transform:scaleX(0.9711);transform-origin:left center;">PivotTable Tools</span>
<div style="left:6px;top:197px;width:102px;height:22px;background:#fff;"></div>
<div style="left:140px;top:197px;width:109px;height:22px;background:#fff;"></div>
<div style="left:254px;top:197px;width:493px;height:22px;background:#fff;"></div>
<span style="left:10.50px;top:200.17px;font-size:12.5px;line-height:16px;color:#555;">A3</span>
<svg style="left:96.5px;top:206.75px" width="4" height="2.5" viewBox="0 0 4 2.5"><path d="M0 0H4L2 2.5Z" fill="#777"/></svg>
<div style="left:122.8px;top:202px;width:1.4px;height:1.4px;background:#999;"></div>
<div style="left:122.8px;top:205.5px;width:1.4px;height:1.4px;background:#999;"></div>
<div style="left:122.8px;top:209px;width:1.4px;height:1.4px;background:#999;"></div>
<div style="left:122.8px;top:212.5px;width:1.4px;height:1.4px;background:#999;"></div>
<svg style="left:151px;top:202px" width="13" height="12" viewBox="0 0 13 12"><path d="M1.5 1.5L11 10.5M11 1.5L1.5 10.5" stroke="#b5b5b5" stroke-width="1.1" fill="none"/></svg>
<svg style="left:187px;top:202px" width="15" height="12" viewBox="0 0 15 12"><path d="M1.5 7L5.5 10.5L13.5 1.5" stroke="#b5b5b5" stroke-width="1.2" fill="none"/></svg>
<span style="left:225.00px;top:198.24px;font-size:15px;line-height:20px;color:#444;font-style:italic;font-family:'Liberation Serif',serif;-webkit-text-stroke:0.4px #444;">f</span>
<span style="left:230.50px;top:204.12px;font-size:10px;line-height:13px;color:#444;font-style:italic;font-family:'Liberation Serif',serif;-webkit-text-stroke:0.4px #444;">x</span>
<span style="left:264.50px;top:200.27px;font-size:12.5px;line-height:16px;color:#444;transform:scaleX(1.0564);transform-origin:left center;">Row Labels</span>
<div style="left:46px;top:231px;width:139px;height:28.5px;background:#d3d3d3;"></div>
<div style="left:46px;top:258.3px;width:139px;height:1.7px;background:#3d8a62;"></div>
<div style="left:-8px;top:318.94px;width:54px;height:29.72px;background:#d3d3d3;"></div>
<div style="left:-8px;top:259px;width:54px;height:0.8px;background:#cfcfcf;"></div>
<div style="left:185px;top:259px;width:562px;height:0.8px;background:#cfcfcf;"></div>
<div style="left:185px;top:233px;width:1px;height:26.5px;background:#cfcfcf;"></div>
<span style="left:109.33px;top:234.09px;font-size:18.5px;line-height:24px;color:#247650;-webkit-text-stroke:0.15px #247650;">A</span>
<div style="left:341px;top:233px;width:1px;height:26.5px;background:#cfcfcf;"></div>
<span style="left:256.83px;top:234.09px;font-size:18.5px;line-height:24px;color:#2a2a2a;-webkit-text-stroke:0.15px #2a2a2a;">B</span>
<div style="left:439px;top:233px;width:1px;height:26.5px;background:#cfcfcf;"></div>
<span style="left:383.32px;top:234.09px;font-size:18.5px;line-height:24px;color:#2a2a2a;-webkit-text-stroke:0.15px #2a2a2a;">C</span>
<div style="left:536px;top:233px;width:1px;height:26.5px;background:#cfcfcf;"></div>
<span style="left:480.82px;top:234.09px;font-size:18.5px;line-height:24px;color:#2a2a2a;-webkit-text-stroke:0.15px #2a2a2a;">D</span>
<div style="left:633.5px;top:233px;width:1px;height:26.5px;background:#cfcfcf;"></div>
<span style="left:578.58px;top:234.09px;font-size:18.5px;line-height:24px;color:#2a2a2a;-webkit-text-stroke:0.15px #2a2a2a;">E</span>
<div style="left:731px;top:233px;width:1px;height:26.5px;background:#cfcfcf;"></div>
<span style="left:676.60px;top:234.09px;font-size:18.5px;line-height:24px;color:#2a2a2a;-webkit-text-stroke:0.15px #2a2a2a;">F</span>
<svg style="left:21px;top:233px" width="24" height="24" viewBox="0 0 24 24"><path d="M23 0V23H0Z" fill="#b9b9b9"/></svg>
<div style="left:46px;top:318.94px;width:295px;height:29.72px;background:#dde4f3;"></div>
<div style="left:46px;top:616.14px;width:295px;height:29.72px;background:#dde4f3;"></div>
<div style="left:-8px;top:288.72px;width:54px;height:1px;background:#cdcdcd;"></div>
<div style="left:46px;top:288.72px;width:701px;height:1px;background:#ececec;"></div>
<div style="left:-8px;top:318.44px;width:54px;height:1px;background:#cdcdcd;"></div>
<div style="left:341px;top:318.44px;width:406px;height:1px;background:#ececec;"></div>
<div style="left:-8px;top:348.16px;width:54px;height:1px;background:#cdcdcd;"></div>
<div style="left:341px;top:348.16px;width:406px;height:1px;background:#ececec;"></div>
<div style="left:-8px;top:377.88px;width:54px;height:1px;background:#cdcdcd;"></div>
<div style="left:46px;top:377.88px;width:295px;height:1px;background:#b8c8e8;"></div>
<div style="left:341px;top:377.88px;width:406px;height:1px;background:#ececec;"></div>
<div style="left:-8px;top:407.6px;width:54px;height:1px;background:#cdcdcd;"></div>
<div style="left:341px;top:407.6px;width:406px;height:1px;background:#ececec;"></div>
<div style="left:-8px;top:437.32px;width:54px;height:1px;background:#cdcdcd;"></div>
<div style="left:46px;top:437.32px;width:295px;height:1px;background:#b8c8e8;"></div>
<div style="left:341px;top:437.32px;width:406px;height:1px;background:#ececec;"></div>
<div style="left:-8px;top:467.04px;width:54px;height:1px;background:#cdcdcd;"></div>
<div style="left:341px;top:467.04px;width:406px;height:1px;background:#ececec;"></div>
<div style="left:-8px;top:496.76px;width:54px;height:1px;background:#cdcdcd;"></div>
<div style="left:341px;top:496.76px;width:406px;height:1px;background:#ececec;"></div>
<div style="left:-8px;top:526.48px;width:54px;height:1px;background:#cdcdcd;"></div>
<div style="left:341px;top:526.48px;width:406px;height:1px;background:#ececec;"></div>
<div style="left:-8px;top:556.2px;width:54px;height:1px;background:#cdcdcd;"></div>
<div style="left:46px;top:556.2px;width:295px;height:1px;background:#b8c8e8;"></div>
<div style="left:341px;top:556.2px;width:406px;height:1px;background:#ececec;"></div>
<div style="left:-8px;top:585.92px;width:54px;height:1px;background:#cdcdcd;"></div>
<div style="left:341px;top:585.92px;width:406px;height:1px;background:#ececec;"></div>
<div style="left:-8px;top:615.64px;width:54px;height:1px;background:#cdcdcd;"></div>
<div style="left:341px;top:615.64px;width:406px;height:1px;background:#ececec;"></div>
<div style="left:-8px;top:645.36px;width:54px;height:1px;background:#cdcdcd;"></div>
<div style="left:46px;top:645.36px;width:701px;height:1px;background:#ececec;"></div>
<div style="left:-8px;top:675.08px;width:54px;height:1px;background:#cdcdcd;"></div>
<div style="left:46px;top:675.08px;width:701px;height:1px;background:#ececec;"></div>
<div style="left:-8px;top:704.8px;width:54px;height:1px;background:#cdcdcd;"></div>
<div style="left:46px;top:704.8px;width:701px;height:1px;background:#ececec;"></div>
<div style="left:-8px;top:734.52px;width:54px;height:1px;background:#cdcdcd;"></div>
<div style="left:46px;top:734.52px;width:701px;height:1px;background:#ececec;"></div>
<div style="left:45.5px;top:259.5px;width:1px;height:479.5px;background:#cdcdcd;"></div>
<div style="left:184.5px;top:259.5px;width:1px;height:59.44px;background:#ececec;"></div>
<div style="left:184.5px;top:645.86px;width:1px;height:93.14px;background:#ececec;"></div>
<div style="left:340.5px;top:259.5px;width:1px;height:479.5px;background:#ececec;"></div>
<div style="left:438.5px;top:259.5px;width:1px;height:479.5px;background:#ececec;"></div>
<div style="left:535.5px;top:259.5px;width:1px;height:479.5px;background:#ececec;"></div>
<div style="left:633px;top:259.5px;width:1px;height:479.5px;background:#ececec;"></div>
<div style="left:730.5px;top:259.5px;width:1px;height:479.5px;background:#ececec;"></div>
<span style="left:17.86px;top:263.29px;font-size:18.5px;line-height:24px;color:#2a2a2a;-webkit-text-stroke:0.3px #2a2a2a;">1</span>
<span style="left:17.86px;top:293.01px;font-size:18.5px;line-height:24px;color:#2a2a2a;-webkit-text-stroke:0.3px #2a2a2a;">2</span>
<span style="left:17.86px;top:322.73px;font-size:18.5px;line-height:24px;color:#247650;-webkit-text-stroke:0.3px #247650;">3</span>
<span style="left:17.86px;top:352.45px;font-size:18.5px;line-height:24px;color:#2a2a2a;-webkit-text-stroke:0.3px #2a2a2a;">4</span>
<span style="left:17.86px;top:382.17px;font-size:18.5px;line-height:24px;color:#2a2a2a;-webkit-text-stroke:0.3px #2a2a2a;">5</span>
<span style="left:17.86px;top:411.89px;font-size:18.5px;line-height:24px;color:#2a2a2a;-webkit-text-stroke:0.3px #2a2a2a;">6</span>
<span style="left:17.86px;top:441.61px;font-size:18.5px;line-height:24px;color:#2a2a2a;-webkit-text-stroke:0.3px #2a2a2a;">7</span>
<span style="left:17.86px;top:471.33px;font-size:18.5px;line-height:24px;color:#2a2a2a;-webkit-text-stroke:0.3px #2a2a2a;">8</span>
<span style="left:17.86px;top:501.05px;font-size:18.5px;line-height:24px;color:#2a2a2a;-webkit-text-stroke:0.3px #2a2a2a;">9</span>
<span style="left:12.71px;top:530.77px;font-size:18.5px;line-height:24px;color:#2a2a2a;-webkit-text-stroke:0.3px #2a2a2a;">10</span>
<span style="left:13.40px;top:560.49px;font-size:18.5px;line-height:24px;color:#2a2a2a;-webkit-text-stroke:0.3px #2a2a2a;">11</span>
<span style="left:12.71px;top:590.21px;font-size:18.5px;line-height:24px;color:#2a2a2a;-webkit-text-stroke:0.3px #2a2a2a;">12</span>
<span style="left:12.71px;top:619.93px;font-size:18.5px;line-height:24px;color:#2a2a2a;-webkit-text-stroke:0.3px #2a2a2a;">13</span>
<span style="left:12.71px;top:649.65px;font-size:18.5px;line-height:24px;color:#2a2a2a;-webkit-text-stroke:0.3px #2a2a2a;">14</span>
<span style="left:12.71px;top:679.37px;font-size:18.5px;line-height:24px;color:#2a2a2a;-webkit-text-stroke:0.3px #2a2a2a;">15</span>
<span style="left:12.71px;top:709.09px;font-size:18.5px;line-height:24px;color:#2a2a2a;-webkit-text-stroke:0.3px #2a2a2a;">16</span>
<div style="left:45.2px;top:317.54px;width:140.4px;height:31.2px;border:1.5px solid #3a7d5c;box-sizing:border-box"></div>
<div style="left:183px;top:346.26px;width:3.5px;height:3.4px;background:#2a6e4c;"></div>
<span style="left:50.30px;top:321.16px;font-size:19px;line-height:25px;color:#151a26;font-weight:bold;transform:scaleX(0.9841);transform-origin:left center;">Row Labels</span>
<div style="left:168px;top:329.6px;width:15px;height:16.8px;background:#f6f7fa;border:1px solid #d3d8e2;box-sizing:border-box"></div>
<svg style="left:172.75px;top:336.8px" width="5.5" height="3" viewBox="0 0 5.5 3"><path d="M0 0H5.5L2.75 3Z" fill="#777"/></svg>
<span style="left:188.50px;top:321.16px;font-size:19px;line-height:25px;color:#151a26;font-weight:bold;transform:scaleX(1.0269);transform-origin:left center;">Sum of Amount</span>
<div style="left:54px;top:357.66px;width:13.5px;height:13px;background:#eceef2;border:1px solid #cfd3da;box-sizing:border-box"></div>
<div style="left:57px;top:363.66px;width:7.5px;height:1.2px;background:#9aa0aa;"></div>
<span style="left:72.00px;top:351.48px;font-size:19px;line-height:25px;color:#111;font-weight:bold;-webkit-text-stroke:0.25px #111;">Dad</span>
<span style="left:315.40px;top:351.48px;font-size:19px;line-height:25px;color:#111;font-weight:bold;transform:scaleX(1.0126);transform-origin:left center;-webkit-text-stroke:0.2px #111;">20</span>
<span style="left:95.40px;top:381.20px;font-size:19px;line-height:25px;color:#1c1c1c;transform:scaleX(1.0125);transform-origin:left center;-webkit-text-stroke:0.35px #1c1c1c;">Sports</span>
<span style="left:315.40px;top:381.20px;font-size:19px;line-height:25px;color:#1c1c1c;transform:scaleX(1.0126);transform-origin:left center;-webkit-text-stroke:0.35px #1c1c1c;">20</span>
<div style="left:54px;top:417.1px;width:13.5px;height:13px;background:#eceef2;border:1px solid #cfd3da;box-sizing:border-box"></div>
<div style="left:57px;top:423.1px;width:7.5px;height:1.2px;background:#9aa0aa;"></div>
<span style="left:72.00px;top:410.92px;font-size:19px;line-height:25px;color:#111;font-weight:bold;transform:scaleX(0.9689);transform-origin:left center;-webkit-text-stroke:0.25px #111;">Kelly</span>
<span style="left:303.40px;top:410.92px;font-size:19px;line-height:25px;color:#111;font-weight:bold;transform:scaleX(1.0536);transform-origin:left center;-webkit-text-stroke:0.2px #111;">270</span>
<span style="left:95.40px;top:440.64px;font-size:19px;line-height:25px;color:#1c1c1c;-webkit-text-stroke:0.35px #1c1c1c;">Books</span>
<span style="left:303.40px;top:440.64px;font-size:19px;line-height:25px;color:#1c1c1c;transform:scaleX(1.0536);transform-origin:left center;-webkit-text-stroke:0.35px #1c1c1c;">125</span>
<span style="left:95.40px;top:470.36px;font-size:19px;line-height:25px;color:#1c1c1c;transform:scaleX(1.0682);transform-origin:left center;-webkit-text-stroke:0.35px #1c1c1c;">Music</span>
<span style="left:315.40px;top:470.36px;font-size:19px;line-height:25px;color:#1c1c1c;transform:scaleX(1.0126);transform-origin:left center;-webkit-text-stroke:0.35px #1c1c1c;">20</span>
<span style="left:95.40px;top:500.08px;font-size:19px;line-height:25px;color:#1c1c1c;transform:scaleX(1.0308);transform-origin:left center;-webkit-text-stroke:0.35px #1c1c1c;">Tickets</span>
<span style="left:303.40px;top:500.08px;font-size:19px;line-height:25px;color:#1c1c1c;transform:scaleX(1.0536);transform-origin:left center;-webkit-text-stroke:0.35px #1c1c1c;">125</span>
<div style="left:54px;top:535.98px;width:13.5px;height:13px;background:#eceef2;border:1px solid #cfd3da;box-sizing:border-box"></div>
<div style="left:57px;top:541.98px;width:7.5px;height:1.2px;background:#9aa0aa;"></div>
<span style="left:72.00px;top:529.80px;font-size:19px;line-height:25px;color:#111;font-weight:bold;transform:scaleX(1.0986);transform-origin:left center;-webkit-text-stroke:0.25px #111;">Mom</span>
<span style="left:303.40px;top:529.80px;font-size:19px;line-height:25px;color:#111;font-weight:bold;transform:scaleX(1.0536);transform-origin:left center;-webkit-text-stroke:0.2px #111;">544</span>
<span style="left:95.40px;top:559.52px;font-size:19px;line-height:25px;color:#1c1c1c;transform:scaleX(0.9837);transform-origin:left center;-webkit-text-stroke:0.35px #1c1c1c;">Food</span>
<span style="left:303.40px;top:559.52px;font-size:19px;line-height:25px;color:#1c1c1c;transform:scaleX(1.0536);transform-origin:left center;-webkit-text-stroke:0.35px #1c1c1c;">470</span>
<span style="left:95.40px;top:589.24px;font-size:19px;line-height:25px;color:#1c1c1c;transform:scaleX(0.9875);transform-origin:left center;-webkit-text-stroke:0.35px #1c1c1c;">Fuel</span>
<span style="left:315.40px;top:589.24px;font-size:19px;line-height:25px;color:#1c1c1c;transform:scaleX(1.0126);transform-origin:left center;-webkit-text-stroke:0.35px #1c1c1c;">74</span>
<span style="left:50.00px;top:619.56px;font-size:19px;line-height:25px;color:#111;font-weight:bold;transform:scaleX(1.0266);transform-origin:left center;">Grand Total</span>
<span style="left:303.40px;top:619.56px;font-size:19px;line-height:25px;color:#111;font-weight:bold;transform:scaleX(1.0536);transform-origin:left center;-webkit-text-stroke:0.2px #111;">834</span>
<svg style="left:20.4px;top:47.7px" width="14.4" height="13.5" viewBox="0 0 16 15"><path d="M0.5 0.5H15.5V14.5H0.5Z" fill="#f2f7f4"/><rect x="3" y="2" width="10" height="6.3" fill="#247650"/><rect x="4.5" y="10.8" width="7" height="2.4" fill="#247650"/><rect x="7.3" y="10.8" width="1.2" height="2.4" fill="#f2f7f4"/></svg>
<svg style="left:64px;top:48px" width="15.3" height="13.6" viewBox="0 0 18 16"><g ><path d="M2 5.2H10.2C14 5.2 16.3 7.6 16.3 10.4C16.3 13 14.2 15 11 15H9.5" fill="none" stroke="#fff" stroke-width="2.3"/><path d="M0 5.2L6.2 0V10.4Z" fill="#fff"/></g></svg>
<svg style="left:88.1px;top:53.2px" width="5" height="3" viewBox="0 0 5 3"><path d="M0 0H5L2.5 3Z" fill="#fff"/></svg>
<svg style="left:108.5px;top:48px" width="15.3" height="13.6" viewBox="0 0 18 16"><g transform="translate(18,0) scale(-1,1)"><path d="M2 5.2H10.2C14 5.2 16.3 7.6 16.3 10.4C16.3 13 14.2 15 11 15H9.5" fill="none" stroke="rgba(255,255,255,.25)" stroke-width="2.3"/><path d="M0 5.2L6.2 0V10.4Z" fill="rgba(255,255,255,.25)"/></g></svg>
<svg style="left:133px;top:53.45px" width="4" height="2.5" viewBox="0 0 4 2.5"><path d="M0 0H4L2 2.5Z" fill="rgba(255,255,255,.28)"/></svg>
<svg style="left:156.6px;top:46.5px" width="15.84" height="16.72" viewBox="0 0 18 19"><path d="M1 0.7H9L13.5 5V17.5H1Z" fill="rgba(255,255,255,.32)" stroke="rgba(255,255,255,.55)" stroke-width="1"/><path d="M3.2 5H8M3.2 8H10.5M3.2 11H9" stroke="rgba(255,255,255,.45)" stroke-width="1"/><rect x="10" y="11" width="7.2" height="7.5" rx="1.6" fill="#fff"/><path d="M11.5 11.5V9.8A2.1 2.1 0 0 1 15.7 9.8V11.5" stroke="#fff" stroke-width="1.3" fill="none"/></svg>
<svg style="left:208.25px;top:51.5px" width="5.1" height="5.1" viewBox="0 0 6 6"><rect x="0.8" y="0" width="4.4" height="1.1" fill="#fff"/><path d="M0 2.6H6L3 5.8Z" fill="#fff"/></svg>
<span style="left:3.80px;top:103.62px;font-size:11.5px;line-height:15px;color:#4a4a4a;transform:scaleX(1.0153);transform-origin:left center;">PivotTable Name:</span>
<div style="left:3.4px;top:124px;width:92.6px;height:18.2px;background:#fff;"></div>
<span style="left:6.00px;top:127.29px;font-size:11px;line-height:14px;color:#4a4a4a;transform:scaleX(1.0691);transform-origin:left center;">PivotTable1</span>
<svg style="left:6px;top:146px" width="17" height="17" viewBox="0 0 17 17"><path d="M0.8 0.8H12V12.5H0.8ZM0.8 4H12M4 0.8V12.5" fill="#fafafa" stroke="#9a9a9a" stroke-width="1"/><path d="M7 7H16V16.2H7Z" fill="#fff" stroke="#9a9a9a" stroke-width="1"/><rect x="7" y="7" width="9" height="2.6" fill="#3b78c9"/></svg>
<span style="left:24.20px;top:147.47px;font-size:12.5px;line-height:16px;color:#5a5a5a;transform:scaleX(0.9889);transform-origin:left center;">Options</span>
<svg style="left:74.3px;top:153.9px" width="5" height="3" viewBox="0 0 5 3"><path d="M0 0H5L2.5 3Z" fill="#666"/></svg>
<span style="left:26.80px;top:170.76px;font-size:10.5px;line-height:14px;color:#777;transform:scaleX(0.9743);transform-origin:left center;">PivotTable</span>
<div style="left:101px;top:99.5px;width:1px;height:82.5px;background:#dcdcdc;"></div>
<span style="left:103.80px;top:103.62px;font-size:11.5px;line-height:15px;color:#4a4a4a;transform:scaleX(0.9931);transform-origin:left center;">Active Field:</span>
<div style="left:103.4px;top:124px;width:100px;height:18.2px;background:#fff;"></div>
<span style="left:105.50px;top:127.29px;font-size:11px;line-height:14px;color:#4a4a4a;transform:scaleX(1.0231);transform-origin:left center;">Buyer</span>
<svg style="left:106px;top:146px" width="15" height="16" viewBox="0 0 15 16"><path d="M0.8 0.8H9.5V12H0.8ZM0.8 3.5H9.5M3.5 0.8V12" fill="#fafafa" stroke="#c2c2c2" stroke-width="1"/><circle cx="10.3" cy="11.3" r="3.2" fill="#c9c9c9" stroke="#b0b0b0" stroke-width="1.4"/><circle cx="10.3" cy="11.3" r="1" fill="#f3f3f3"/></svg>
<span style="left:124.20px;top:147.47px;font-size:12.5px;line-height:16px;color:#a9a9a9;transform:scaleX(0.9335);transform-origin:left center;">Field Settings</span>
<svg style="left:212px;top:103px" width="24" height="28" viewBox="0 0 24 28"><path d="M12 0V23.5M1.8 14L12 24.8L22.2 14" stroke="#b3b1b8" stroke-width="4.8" fill="none"/></svg>
<svg style="left:251.5px;top:103px" width="24" height="28" viewBox="0 0 24 28"><path d="M12 27.8V4M1.8 13.8L12 3L22.2 13.8" stroke="#b3b1b8" stroke-width="4.8" fill="none"/></svg>
<span style="left:213.70px;top:134.97px;font-size:12.5px;line-height:16px;color:#a9a9a9;transform:scaleX(0.9433);transform-origin:left center;">Drill</span>
<span style="left:209.00px;top:151.47px;font-size:12.5px;line-height:16px;color:#a9a9a9;transform:scaleX(0.9387);transform-origin:left center;">Down</span>
<span style="left:252.60px;top:134.97px;font-size:12.5px;line-height:16px;color:#a9a9a9;transform:scaleX(0.9386);transform-origin:left center;">Drill</span>
<span style="left:251.00px;top:151.47px;font-size:12.5px;line-height:16px;color:#a9a9a9;transform:scaleX(0.9387);transform-origin:left center;">Up</span>
<svg style="left:270px;top:158.05px" width="4" height="2.5" viewBox="0 0 4 2.5"><path d="M0 0H4L2 2.5Z" fill="#c4c4c4"/></svg>
<svg style="left:285.5px;top:108.5px" width="16" height="16" viewBox="0 0 16 16"><path d="M7 1.5H14V14.5H7M10 5.8H14M10 10.2H14" stroke="#d0d0d0" stroke-width="1.2" fill="none"/><path d="M0.5 4H5" stroke="#b8b8b8" stroke-width="1.3"/><path d="M2.75 1.7V6.3" stroke="#b8b8b8" stroke-width="1.3"/></svg>
<span style="left:303.70px;top:110.07px;font-size:12.5px;line-height:16px;color:#a9a9a9;transform:scaleX(0.9183);transform-origin:left center;">Expand Field</span>
<svg style="left:285.5px;top:138px" width="16" height="16" viewBox="0 0 16 16"><path d="M7 1.5H14V14.5H7M10 5.8H14M10 10.2H14" stroke="#d0d0d0" stroke-width="1.2" fill="none"/><path d="M0.5 4H5" stroke="#b8b8b8" stroke-width="1.3"/></svg>
<span style="left:303.70px;top:140.07px;font-size:12.5px;line-height:16px;color:#a9a9a9;transform:scaleX(0.9254);transform-origin:left center;">Collapse Field</span>
<span style="left:215.40px;top:170.76px;font-size:10.5px;line-height:14px;color:#666;">Active Field</span>
<div style="left:384.5px;top:99.5px;width:1px;height:82.5px;background:#dcdcdc;"></div>
<svg style="left:393px;top:103.5px" width="12" height="10" viewBox="0 0 12 10"><path d="M0 5H9.5M6 1.5L10 5L6 8.5" stroke="#ababab" stroke-width="1.4" fill="none"/></svg>
<span style="left:409.00px;top:101.97px;font-size:12.5px;line-height:16px;color:#a9a9a9;transform:scaleX(0.9483);transform-origin:left center;">Group Selection</span>
<svg style="left:391px;top:122px" width="16" height="16" viewBox="0 0 16 16"><path d="M4 3.5H15V15H4ZM4 7H15M8 3.5V15M4 11H15" fill="#f7f4f7" stroke="#d4cdd6" stroke-width="1"/><path d="M0.5 3H4M2.2 1.2V4.8" stroke="#c0c0c0" stroke-width="1.1"/></svg>
<span style="left:409.00px;top:122.97px;font-size:12.5px;line-height:16px;color:#a9a9a9;transform:scaleX(0.9760);transform-origin:left center;">Ungroup</span>
<svg style="left:392px;top:143.3px" width="14" height="15" viewBox="0 0 14 15"><path d="M1 3.5H12.5V14.5H1ZM1 6.5H12.5" fill="#f7f4f7" stroke="#d4cdd6" stroke-width="1"/><path d="M3 3.5V1.2H10.5V3.5" fill="none" stroke="#c8c8c8" stroke-width="1.2"/><path d="M6.8 8V13" stroke="#d8a8c8" stroke-width="1.2"/></svg>
<span style="left:409.00px;top:143.47px;font-size:12.5px;line-height:16px;color:#a9a9a9;transform:scaleX(0.9279);transform-origin:left center;">Group Field</span>
<span style="left:427.70px;top:170.56px;font-size:10.5px;line-height:14px;color:#666;transform:scaleX(1.0383);transform-origin:left center;">Group</span>
<div style="left:501px;top:99.5px;width:1px;height:82.5px;background:#dcdcdc;"></div>
<svg style="left:510px;top:102.5px" width="29" height="29" viewBox="0 0 29 29"><rect x="0.5" y="0.5" width="28" height="27.5" fill="#fff" stroke="#c9d3e2" stroke-width="1"/><rect x="0" y="0" width="29" height="3.8" fill="#757575"/><path d="M3 7.5H24M3 13H15M3 18.5H15M3 24H26" stroke="#3f7fd0" stroke-width="2.4"/><path d="M11 11.5H28.5L21.5 18V27.5H18V18Z" fill="#8a8a8a"/></svg>
<span style="left:510.00px;top:134.87px;font-size:12.5px;line-height:16px;color:#333;transform:scaleX(0.9212);transform-origin:left center;">Insert</span>
<span style="left:510.70px;top:151.27px;font-size:12.5px;line-height:16px;color:#333;transform:scaleX(0.8638);transform-origin:left center;">Slicer</span>
<svg style="left:553.5px;top:108.5px" width="29" height="25" viewBox="0 0 29 25"><rect x="0.5" y="0.5" width="27" height="14" fill="#fff" stroke="#d5d5d5" stroke-width="1"/><rect x="0" y="0" width="28.5" height="3.8" fill="#757575"/><path d="M4 8.5H16" stroke="#3f7fd0" stroke-width="1.6"/><path d="M11 7H29L22 14V24.5H18.5V14Z" fill="#8a8a8a"/></svg>
<span style="left:553.50px;top:134.87px;font-size:12.5px;line-height:16px;color:#333;transform:scaleX(0.9276);transform-origin:left center;">Insert</span>
<span style="left:546.20px;top:151.27px;font-size:12.5px;line-height:16px;color:#333;transform:scaleX(0.9322);transform-origin:left center;">Timeline</span>
<svg style="left:611.5px;top:102.5px" width="30" height="29" viewBox="0 0 30 29"><rect x="0.8" y="0.8" width="13" height="13" fill="#f6f1f6" stroke="#dacfe0" stroke-width="1.2"/><path d="M4 4L10 10M10 5.5V10H5.5" stroke="#dacfe0" stroke-width="1.1" fill="none"/><rect x="13.5" y="12.5" width="15.5" height="15.5" fill="#f6f1f6" stroke="#dacfe0" stroke-width="1.2"/><rect x="13.5" y="12.5" width="15.5" height="3" fill="#d8d0dc"/><path d="M17 19H26L22.5 22V26H20.5V22Z" fill="#d2cad6"/><path d="M4 17V22.5H10M8 20L10.5 22.5L8 25" stroke="#cfcfcf" stroke-width="1.2" fill="none"/></svg>
<span style="left:614.00px;top:134.87px;font-size:12.5px;line-height:16px;color:#c0c0c0;transform:scaleX(0.8856);transform-origin:left center;">Filter</span>
<span style="left:592.90px;top:151.27px;font-size:12.5px;line-height:16px;color:#c0c0c0;transform:scaleX(0.9498);transform-origin:left center;">Connections</span>
<span style="left:571.50px;top:170.56px;font-size:10.5px;line-height:14px;color:#777;transform:scaleX(0.9900);transform-origin:left center;">Filter</span>
<div style="left:663.5px;top:99.5px;width:1px;height:82.5px;background:#dcdcdc;"></div>
<svg style="left:677px;top:101.5px" width="30" height="32" viewBox="0 0 30 32"><path d="M1 0.8H14L22 8.8V28.5H1Z" fill="#fff" stroke="#c4c4c4" stroke-width="1"/><path d="M14 0.8V8.8H22" fill="none" stroke="#c4c4c4" stroke-width="1"/><circle cx="20.5" cy="24" r="7.6" fill="#f3f3f3"/><path d="M14.8 23.5A5.8 5.8 0 0 1 25 20.2M26.2 24.5A5.8 5.8 0 0 1 16 27.8" stroke="#4a9a6c" stroke-width="2.4" fill="none"/><path d="M22.5 21.5H27.8V16.5ZM18.5 26.5H13.2V31.5Z" fill="#4a9a6c"/></svg>
<span style="left:669.60px;top:134.87px;font-size:12.5px;line-height:16px;color:#333;transform:scaleX(0.8819);transform-origin:left center;">Refresh</span>
<svg style="left:686.55px;top:157.2px" width="4.5" height="2.8" viewBox="0 0 4.5 2.8"><path d="M0 0H4.5L2.25 2.8Z" fill="#555"/></svg>
<span style="left:712.40px;top:134.87px;font-size:12.5px;line-height:16px;color:#333;">Change Data</span>
<span style="left:724.50px;top:151.27px;font-size:12.5px;line-height:16px;color:#333;">Source</span>
<span style="left:714.60px;top:170.56px;font-size:10.5px;line-height:14px;color:#666;transform:scaleX(0.9423);transform-origin:left center;">Data</span>
<svg style="left:735px;top:102px" width="10" height="28" viewBox="0 0 10 28"><path d="M0.8 0.8H10V27H0.8Z" fill="#fff" stroke="#c4c4c4" stroke-width="1"/></svg>
</div></div></div>
<div class="cap" style="left:282.0px;top:773.1px;font-size:42px;line-height:44px;transform:scaleX(1.0276);transform-origin:left center">Detailed records</div>
<div class="cap" style="left:1175.0px;top:773.1px;font-size:42px;line-height:44px;transform:scaleX(1.0287);transform-origin:left center">Pivot table</div>
</body></html>
